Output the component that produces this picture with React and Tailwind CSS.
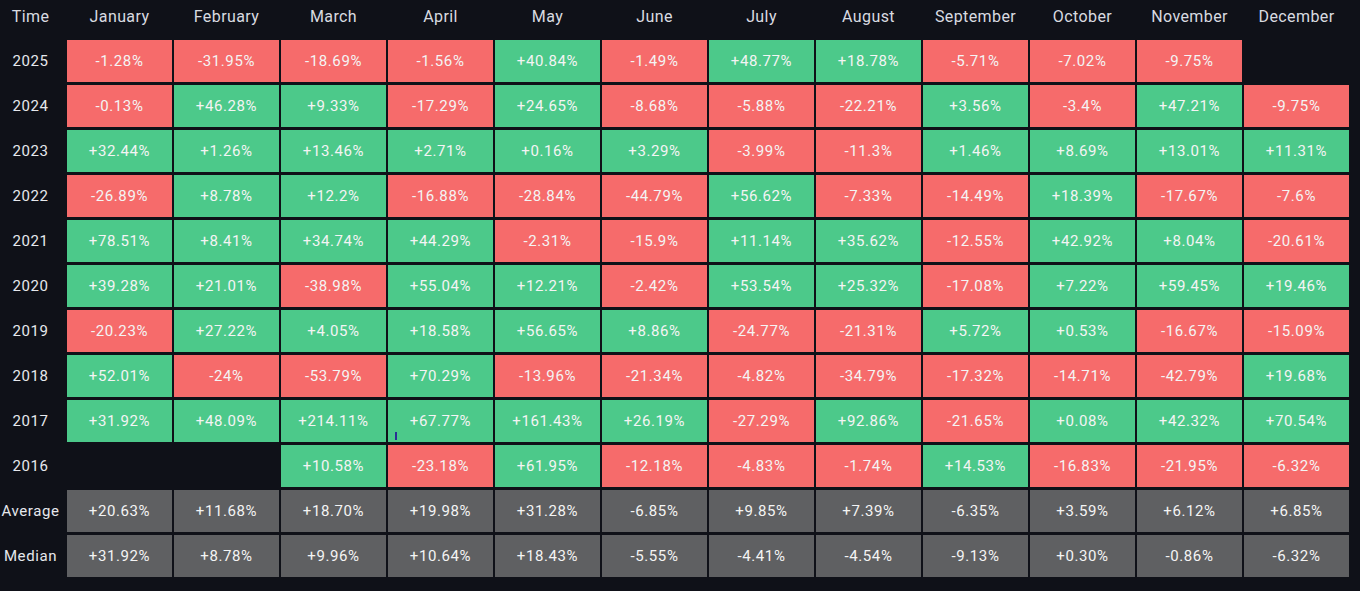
import React from 'react';

const months = ['January', 'February', 'March', 'April', 'May', 'June', 'July', 'August', 'September', 'October', 'November', 'December'];

const rows = [
  ['2025', ['-1.28%', '-31.95%', '-18.69%', '-1.56%', '+40.84%', '-1.49%', '+48.77%', '+18.78%', '-5.71%', '-7.02%', '-9.75%', null]],
  ['2024', ['-0.13%', '+46.28%', '+9.33%', '-17.29%', '+24.65%', '-8.68%', '-5.88%', '-22.21%', '+3.56%', '-3.4%', '+47.21%', '-9.75%']],
  ['2023', ['+32.44%', '+1.26%', '+13.46%', '+2.71%', '+0.16%', '+3.29%', '-3.99%', '-11.3%', '+1.46%', '+8.69%', '+13.01%', '+11.31%']],
  ['2022', ['-26.89%', '+8.78%', '+12.2%', '-16.88%', '-28.84%', '-44.79%', '+56.62%', '-7.33%', '-14.49%', '+18.39%', '-17.67%', '-7.6%']],
  ['2021', ['+78.51%', '+8.41%', '+34.74%', '+44.29%', '-2.31%', '-15.9%', '+11.14%', '+35.62%', '-12.55%', '+42.92%', '+8.04%', '-20.61%']],
  ['2020', ['+39.28%', '+21.01%', '-38.98%', '+55.04%', '+12.21%', '-2.42%', '+53.54%', '+25.32%', '-17.08%', '+7.22%', '+59.45%', '+19.46%']],
  ['2019', ['-20.23%', '+27.22%', '+4.05%', '+18.58%', '+56.65%', '+8.86%', '-24.77%', '-21.31%', '+5.72%', '+0.53%', '-16.67%', '-15.09%']],
  ['2018', ['+52.01%', '-24%', '-53.79%', '+70.29%', '-13.96%', '-21.34%', '-4.82%', '-34.79%', '-17.32%', '-14.71%', '-42.79%', '+19.68%']],
  ['2017', ['+31.92%', '+48.09%', '+214.11%', '+67.77%', '+161.43%', '+26.19%', '-27.29%', '+92.86%', '-21.65%', '+0.08%', '+42.32%', '+70.54%']],
  ['2016', [null, null, '+10.58%', '-23.18%', '+61.95%', '-12.18%', '-4.83%', '-1.74%', '+14.53%', '-16.83%', '-21.95%', '-6.32%']],
];

const summary = [
  ['Average', ['+20.63%', '+11.68%', '+18.70%', '+19.98%', '+31.28%', '-6.85%', '+9.85%', '+7.39%', '-6.35%', '+3.59%', '+6.12%', '+6.85%']],
  ['Median', ['+31.92%', '+8.78%', '+9.96%', '+10.64%', '+18.43%', '-5.55%', '-4.41%', '-4.54%', '-9.13%', '+0.30%', '-0.86%', '-6.32%']],
];

function Cell({ value, gray }) {
  if (value === null) return <div className="h-[42px]" />;
  const bg = gray ? 'bg-[#5f6062]' : value.startsWith('-') ? 'bg-[#f66b6b]' : 'bg-[#4cc98a]';
  return (
    <div className={`h-[42px] ${bg} flex items-center justify-center text-[15px] text-[#f4f4f4] tracking-[0.6px]`}>
      {value}
    </div>
  );
}

function Label({ children }) {
  return (
    <div className="h-[42px] flex items-center justify-center pr-[4px] text-[15px] text-[#e6e8ec] tracking-[0.6px] whitespace-nowrap">
      {children}
    </div>
  );
}

export default function App() {
  return (
    <div className="w-[1360px] h-[591px] bg-[#0f1118] overflow-hidden relative" style={{ fontFamily: 'Roboto, "Noto Sans", sans-serif' }}>
      <div className="grid grid-cols-[65px_repeat(12,105px)] gap-x-[2px] gap-y-[3px]">
        <div className="h-[37px] flex items-center justify-center pr-[4px] pb-[4px] text-[16px] text-[#d9dbe0] tracking-[0.4px]">Time</div>
        {months.map((m) => (
          <div key={m} className="h-[37px] flex items-center justify-center pb-[4px] text-[16px] text-[#d9dbe0] tracking-[0.4px]">
            {m}
          </div>
        ))}
        {rows.map(([year, vals]) => (
          <React.Fragment key={year}>
            <Label>{year}</Label>
            {vals.map((v, i) => (
              <Cell key={i} value={v} />
            ))}
          </React.Fragment>
        ))}
        {summary.map(([name, vals]) => (
          <React.Fragment key={name}>
            <Label>{name}</Label>
            {vals.map((v, i) => (
              <Cell key={i} value={v} gray />
            ))}
          </React.Fragment>
        ))}
      </div>
      <div className="absolute left-[395px] top-[432px] w-[2px] h-[8px] bg-[#2b2f94]" />
    </div>
  );
}
